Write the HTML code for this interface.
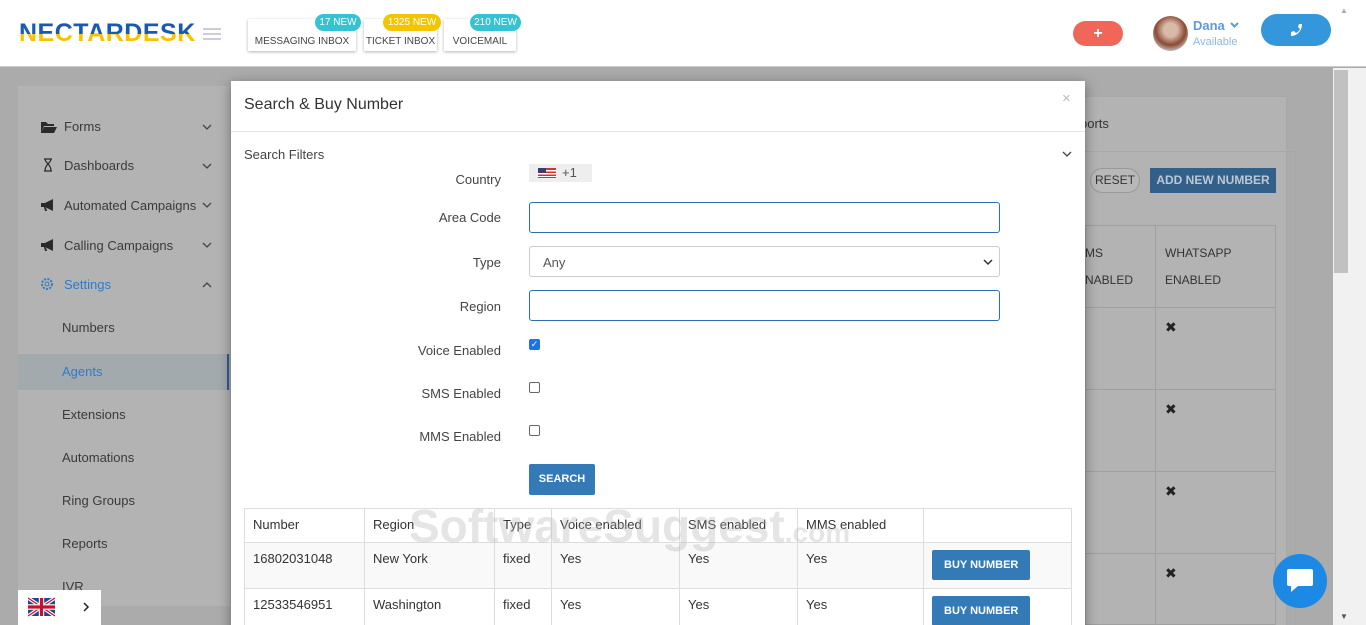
<!DOCTYPE html>
<html style="width:1366px;height:625px;overflow:hidden"><head><meta charset="utf-8"><style>
*{box-sizing:border-box;margin:0;padding:0}
body{width:1366px;height:625px;overflow:hidden;position:relative;background:#ababab;font-family:"Liberation Sans",sans-serif;font-size:13px;color:#333}
.a{position:absolute}
.hdr{left:0;top:0;width:1366px;height:67px;background:#fff;border-bottom:1px solid #ccc}
.logo{left:19px;top:19px;font-size:25px;font-weight:bold;letter-spacing:0.5px;background:linear-gradient(#1659b8 52%,#f5c400 52%);-webkit-background-clip:text;color:transparent}
.tab{top:19px;height:32px;background:#fff;box-shadow:0 1px 3px rgba(0,0,0,.3);font-size:10px;color:#444;text-align:center;padding-top:17px}
.badge{top:14px;height:17px;border-radius:9px;font-size:10px;color:#fff;text-align:center;line-height:17px}
.side{left:18px;top:86px;width:212px;height:520px;background:#b3b3b3}
.si{left:64px;font-size:13px;color:#3a3a3a}
.chev{left:202px;width:10px;height:10px}
.sub{left:62px;font-size:13px;color:#3a3a3a}
.modal{left:231px;top:81px;width:854px;height:560px;background:#fff;box-shadow:0 3px 12px rgba(0,0,0,.4)}
.lbl{width:270px;text-align:right;font-size:13px;color:#444}
.inp{left:298px;width:471px;height:31px;border:1px solid #2f6eb3;border-radius:3px}
.cb{left:298px;width:11px;height:11px;border:1px solid #666;border-radius:2px;background:#fff}
table{border-collapse:collapse;position:absolute;left:13px;top:427px;width:828px;font-size:13px}
td{border:1px solid #ddd;padding:0 8px;height:46px;vertical-align:top;padding-top:8px;color:#333}
tr.h td{height:34px}
tr.g td{background:#f9f9f9}
.buy{display:inline-block;background:#337ab7;color:#fff;font-size:11px;font-weight:bold;padding:9px 12px;border-radius:2px}
.x{left:1165px;font-size:14px;color:#222}
</style></head><body>
<div class="a hdr"></div>
<div class="a logo">NECTARDESK</div>
<div class="a" style="left:203px;top:28px;width:18px;height:2px;background:#ccd;box-shadow:0 5px 0 #ccd,0 10px 0 #ccd"></div>
<div class="a tab" style="left:248px;width:108px">MESSAGING INBOX</div>
<div class="a tab" style="left:364px;width:73px">TICKET INBOX</div>
<div class="a tab" style="left:444px;width:72px">VOICEMAIL</div>
<div class="a badge" style="left:315px;width:46px;background:#35c2d3">17 NEW</div>
<div class="a badge" style="left:383px;width:58px;background:#f2c500">1325 NEW</div>
<div class="a badge" style="left:470px;width:51px;background:#35c2d3">210 NEW</div>
<div class="a" style="left:1073px;top:21px;width:50px;height:25px;border-radius:13px;background:#f0675a;color:#fff;text-align:center;font-weight:bold;font-size:16px;line-height:25px">+</div>
<div class="a" style="left:1153px;top:16px;width:35px;height:35px;border-radius:50%;background:radial-gradient(circle at 50% 40%,#d9b9a8 25%,#8a4a33 55%,#c8c8c8 80%)"></div>
<div class="a" style="left:1193px;top:18px;color:#5b9bd8;font-weight:bold;font-size:13px">Dana</div>
<svg class="a" style="left:1230px;top:22px" width="9" height="6"><path d="M1 1L4.5 4.5L8 1" stroke="#5b9bd8" stroke-width="2" fill="none"/></svg>
<div class="a" style="left:1193px;top:36px;color:#8ab8e6;font-size:11px">Available</div>
<div class="a" style="left:1261px;top:14px;width:70px;height:32px;border-radius:16px;background:#3496db"></div>
<svg class="a" style="left:1288px;top:22px" width="16" height="16" viewBox="0 0 16 16"><path d="M13 10l-3-1-2 2c-2-1-3-2-4-4l2-2-1-3H2C2 9 7 14 13 14z" fill="#fff" transform="scale(-1,1) translate(-16,0)"/></svg>
<div class="a" style="left:1333px;top:68px;width:33px;height:557px;background:#f1f1f1"></div>
<div class="a" style="left:1334px;top:70px;width:14px;height:203px;background:#c1c1c1"></div>
<div class="a" style="left:1340px;top:612px;font-size:8px;color:#555">▼</div>
<div class="a" style="left:1340px;top:6px;font-size:8px;color:#aaa">▲</div>
<div class="a side"></div>
<div class="a" style="left:18px;top:354px;width:212px;height:36px;background:#a2aaae"></div>
<div class="a" style="left:227px;top:354px;width:2px;height:36px;background:#3a5a9a"></div>
<svg class="a" style="left:40px;top:120px" width="18" height="14"><path d="M1 2h5l2 2h6v2H4L1 13z M4 7h13l-3 6H1z" fill="#2a2a2a"/></svg>
<svg class="a" style="left:43px;top:158px" width="10" height="14"><path d="M1 1h8M1 13h8M2 1c0 4 6 5 6 12M8 1c0 4-6 5-6 12" stroke="#2a2a2a" fill="none" stroke-width="1.2"/></svg>
<svg class="a" style="left:40px;top:198px" width="16" height="14"><path d="M1 5h4l8-4v12l-8-4H1z M4 9l1 4h2l-1-4" fill="#2a2a2a"/></svg>
<svg class="a" style="left:40px;top:238px" width="16" height="14"><path d="M1 5h4l8-4v12l-8-4H1z M4 9l1 4h2l-1-4" fill="#2a2a2a"/></svg>
<svg class="a" style="left:40px;top:277px" width="14" height="14"><circle cx="7" cy="7" r="5" stroke="#2f7bc8" stroke-width="2" stroke-dasharray="2 1.4" fill="none"/><circle cx="7" cy="7" r="2" stroke="#2f7bc8" fill="none"/></svg>
<div class="a si" style="top:119px">Forms</div>
<div class="a si" style="top:158px">Dashboards</div>
<div class="a si" style="top:198px">Automated Campaigns</div>
<div class="a si" style="top:238px">Calling Campaigns</div>
<div class="a si" style="top:277px;color:#2f7bc8">Settings</div>
<svg class="a chev" style="top:122px"><path d="M1 3l4 4 4-4" stroke="#444" fill="none" stroke-width="1.3"/></svg>
<svg class="a chev" style="top:161px"><path d="M1 3l4 4 4-4" stroke="#444" fill="none" stroke-width="1.3"/></svg>
<svg class="a chev" style="top:200px"><path d="M1 3l4 4 4-4" stroke="#444" fill="none" stroke-width="1.3"/></svg>
<svg class="a chev" style="top:240px"><path d="M1 3l4 4 4-4" stroke="#444" fill="none" stroke-width="1.3"/></svg>
<svg class="a chev" style="top:280px"><path d="M1 7l4-4 4 4" stroke="#444" fill="none" stroke-width="1.3"/></svg>
<div class="a sub" style="top:320px">Numbers</div>
<div class="a sub" style="top:364px;color:#2f7bc8">Agents</div>
<div class="a sub" style="top:407px">Extensions</div>
<div class="a sub" style="top:450px">Automations</div>
<div class="a sub" style="top:493px">Ring Groups</div>
<div class="a sub" style="top:536px">Reports</div>
<div class="a sub" style="top:579px">IVR</div>
<div class="a" style="left:18px;top:590px;width:83px;height:35px;background:#fff"></div>
<svg class="a" style="left:28px;top:597px" width="27" height="20" viewBox="0 0 60 40"><rect width="60" height="40" fill="#21468b"/><path d="M0 0L60 40M60 0L0 40" stroke="#fff" stroke-width="8"/><path d="M0 0L60 40M60 0L0 40" stroke="#c8102e" stroke-width="3"/><path d="M30 0V40M0 20H60" stroke="#fff" stroke-width="12"/><path d="M30 0V40M0 20H60" stroke="#c8102e" stroke-width="7"/></svg>
<svg class="a" style="left:83px;top:602px" width="7" height="10"><path d="M1 1l4 4-4 4" stroke="#222" stroke-width="1.5" fill="none"/></svg>
<div class="a" style="left:1063px;top:96px;width:224px;height:530px;background:#b3b3b3;border:1px solid #a8a8a8"></div>
<div class="a" style="left:1080px;top:116px;color:#333">ports</div>
<div class="a" style="left:1085px;top:151px;width:211px;height:1px;background:#a8a8a8"></div>
<div class="a" style="left:1295px;top:151px;width:1px;height:480px;background:#a8a8a8"></div>
<div class="a" style="left:1090px;top:168px;width:50px;height:25px;border-radius:13px;border:1px solid #999;background:#b8b8b8;font-size:12px;color:#333;text-align:center;line-height:23px">RESET</div>
<div class="a" style="left:1150px;top:168px;width:126px;height:25px;background:#336089;color:#bcc8d4;font-size:12px;font-weight:bold;text-align:center;line-height:25px">ADD NEW NUMBER</div>
<div class="a" style="left:1085px;top:225px;width:191px;height:400px;border:1px solid #a0a0a0"></div>
<div class="a" style="left:1155px;top:225px;width:1px;height:400px;background:#a0a0a0"></div>
<div class="a" style="left:1085px;top:307px;width:191px;height:1px;background:#a0a0a0;box-shadow:0 82px 0 #a0a0a0,0 164px 0 #a0a0a0,0 246px 0 #a0a0a0"></div>
<div class="a" style="left:1085px;top:240px;font-size:12px;color:#333;line-height:27px">MS<br>NABLED</div>
<div class="a" style="left:1165px;top:240px;font-size:12px;color:#333;line-height:27px">WHATSAPP<br>ENABLED</div>
<div class="a x" style="top:319px">✖</div>
<div class="a x" style="top:401px">✖</div>
<div class="a x" style="top:483px">✖</div>
<div class="a x" style="top:565px">✖</div>
<div class="a" style="left:1273px;top:554px;width:54px;height:54px;border-radius:50%;background:#1e88e5"></div>
<svg class="a" style="left:1286px;top:568px" width="28" height="26"><path d="M3 1h22a2 2 0 0 1 2 2v13a2 2 0 0 1-2 2H12l-7 6v-6H3a2 2 0 0 1-2-2V3a2 2 0 0 1 2-2z" fill="#fff"/></svg>
<div class="a modal">
 <div class="a" style="left:13px;top:15px;font-size:16px;color:#333">Search &amp; Buy Number</div>
 <div class="a" style="left:831px;top:9px;font-size:15px;color:#bbb">×</div>
 <div class="a" style="left:0;top:50px;width:854px;height:1px;background:#e5e5e5"></div>
 <div class="a" style="left:13px;top:66px;color:#444">Search Filters</div>
 <svg class="a" style="left:831px;top:69px" width="10" height="8"><path d="M1 2l4 4 4-4" stroke="#444" fill="none" stroke-width="1.3"/></svg>
 <div class="a lbl" style="top:91px">Country</div>
 <div class="a" style="left:298px;top:83px;width:63px;height:18px;background:#eee"></div>
 <svg class="a" style="left:307px;top:87px" width="18" height="10"><rect width="18" height="10" fill="#c33"/><rect y="2" width="18" height="1.5" fill="#fff"/><rect y="5" width="18" height="1.5" fill="#fff"/><rect y="8" width="18" height="1" fill="#fff"/><rect width="8" height="5" fill="#3c3b6e"/></svg>
 <div class="a" style="left:331px;top:84px;color:#555">+1</div>
 <div class="a lbl" style="top:129px">Area Code</div>
 <div class="a inp" style="top:121px"></div>
 <div class="a lbl" style="top:174px">Type</div>
 <div class="a inp" style="top:165px;border-color:#ccc;padding:8px 13px;color:#555">Any<svg style="position:absolute;right:6px;top:11px" width="10" height="8"><path d="M1 2l4 4 4-4" stroke="#333" fill="none" stroke-width="1.5"/></svg></div>
 <div class="a lbl" style="top:218px">Region</div>
 <div class="a inp" style="top:209px"></div>
 <div class="a lbl" style="top:262px">Voice Enabled</div>
 <div class="a cb" style="top:258px;background:#1a73e8;border-color:#1a73e8;color:#fff;font-size:9px;line-height:9px;text-align:center">✓</div>
 <div class="a lbl" style="top:305px">SMS Enabled</div>
 <div class="a cb" style="top:301px"></div>
 <div class="a lbl" style="top:348px">MMS Enabled</div>
 <div class="a cb" style="top:344px"></div>
 <div class="a" style="left:298px;top:383px;width:66px;height:31px;background:#337ab7;color:#fff;font-size:11px;font-weight:bold;text-align:center;line-height:31px;border-radius:2px">SEARCH</div>
 <table>
  <tr class="h"><td style="width:120px">Number</td><td style="width:130px">Region</td><td style="width:57px">Type</td><td style="width:128px">Voice enabled</td><td style="width:118px">SMS enabled</td><td style="width:126px">MMS enabled</td><td></td></tr>
  <tr class="g"><td>16802031048</td><td>New York</td><td>fixed</td><td>Yes</td><td>Yes</td><td>Yes</td><td style="padding-top:7px"><span class="buy">BUY NUMBER</span></td></tr>
  <tr><td>12533546951</td><td>Washington</td><td>fixed</td><td>Yes</td><td>Yes</td><td>Yes</td><td style="padding-top:7px"><span class="buy">BUY NUMBER</span></td></tr>
 </table>
 <div class="a" style="left:178px;top:418px;font-size:46px;font-weight:bold;color:rgba(180,180,180,.35)">SoftwareSuggest<span style="font-size:28px">.com</span></div>
</div>
</body></html>
